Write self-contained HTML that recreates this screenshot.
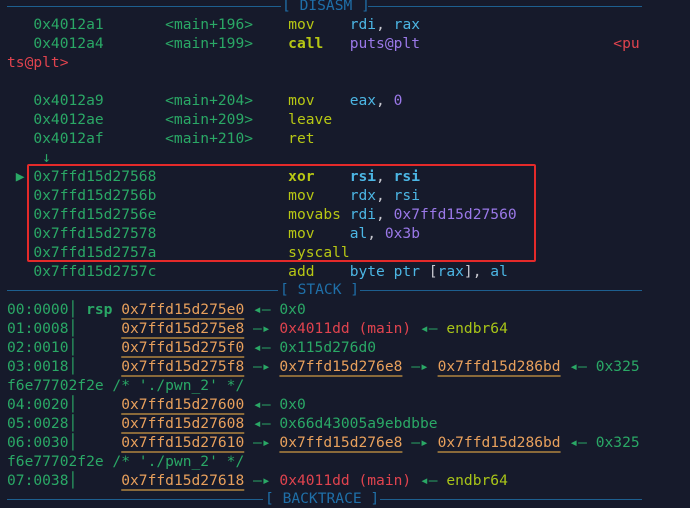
<!DOCTYPE html>
<html><head><meta charset="utf-8"><style>
html,body{margin:0;padding:0;background:#161a2b;width:690px;height:502px;overflow:hidden}
.l{position:absolute;left:7px;white-space:pre;font-family:"DejaVu Sans Mono","Liberation Mono",monospace;font-size:14.6px;line-height:19px;height:19px;color:#2aa866}
.g{color:#2aa866}.m{color:#b7c714}.b{font-weight:bold}.c{color:#4cb6e4}.p{color:#9a78e8}.r{color:#e0434e}.o{color:#e8a05c;text-decoration:underline;text-decoration-color:#8a6a3a;text-underline-offset:4px;text-decoration-thickness:2px}.y{color:#a8c418}.w{color:#c8c8d0}
.sep{position:absolute;height:1px;background:#1d5f8f}
.st{position:absolute;font-family:"DejaVu Sans Mono",monospace;font-size:14.6px;color:#1f6fa8;line-height:19px;white-space:pre}
.box{position:absolute;left:27px;top:164px;width:505px;height:94px;border:2px solid #e42a2a;border-radius:2px}
</style></head><body>
<div class="sep" style="left:7px;top:6px;width:274px"></div><div class="st" style="left:282px;top:-4px">[ DISASM ]</div><div class="sep" style="left:368px;top:6px;width:274px"></div>
<div class="l" style="top:15px">   0x4012a1       <span class="g">&lt;main+196&gt;</span>    <span class="m">mov</span>    <span class="c">rdi</span><span class="w">,</span> <span class="c">rax</span></div>
<div class="l" style="top:34px">   0x4012a4       &lt;main+199&gt;    <span class="m b">call</span>   <span class="p">puts@plt</span>                      <span class="r">&lt;pu</span></div>
<div class="l" style="top:53px"><span class="r">ts@plt&gt;</span></div>
<div class="l" style="top:91px">   0x4012a9       &lt;main+204&gt;    <span class="m">mov</span>    <span class="c">eax</span><span class="w">,</span> <span class="p">0</span></div>
<div class="l" style="top:110px">   0x4012ae       &lt;main+209&gt;    <span class="m">leave</span></div>
<div class="l" style="top:129px">   0x4012af       &lt;main+210&gt;    <span class="m">ret</span></div>
<div class="l" style="top:148px">    ↓</div>
<div class="l" style="top:167px"> ▶ 0x7ffd15d27568               <span class="m b">xor</span>    <span class="c b">rsi</span><span class="w">,</span> <span class="c b">rsi</span></div>
<div class="l" style="top:186px">   0x7ffd15d2756b               <span class="m">mov</span>    <span class="c">rdx</span><span class="w">,</span> <span class="c">rsi</span></div>
<div class="l" style="top:205px">   0x7ffd15d2756e               <span class="m">movabs</span> <span class="c">rdi</span><span class="w">,</span> <span class="p">0x7ffd15d27560</span></div>
<div class="l" style="top:224px">   0x7ffd15d27578               <span class="m">mov</span>    <span class="c">al</span><span class="w">,</span> <span class="p">0x3b</span></div>
<div class="l" style="top:243px">   0x7ffd15d2757a               <span class="m">syscall</span></div>
<div class="l" style="top:262px">   0x7ffd15d2757c               <span class="m">add</span>    <span class="c">byte ptr </span><span class="w">[</span><span class="c">rax</span><span class="w">],</span> <span class="c">al</span></div>
<div class="box"></div>
<div class="sep" style="left:7px;top:290px;width:271px"></div><div class="st" style="left:280px;top:280px">[ STACK ]</div><div class="sep" style="left:360px;top:290px;width:282px"></div>
<div class="l" style="top:300px">00:0000│ <span class="b">rsp</span> <span class="o">0x7ffd15d275e0</span> ◂— 0x0</div>
<div class="l" style="top:319px">01:0008│     <span class="o">0x7ffd15d275e8</span> —▸ <span class="r">0x4011dd (main)</span> ◂— <span class="y">endbr64</span></div>
<div class="l" style="top:338px">02:0010│     <span class="o">0x7ffd15d275f0</span> ◂— 0x115d276d0</div>
<div class="l" style="top:357px">03:0018│     <span class="o">0x7ffd15d275f8</span> —▸ <span class="o">0x7ffd15d276e8</span> —▸ <span class="o">0x7ffd15d286bd</span> ◂— 0x325</div>
<div class="l" style="top:376px">f6e77702f2e /* './pwn_2' */</div>
<div class="l" style="top:395px">04:0020│     <span class="o">0x7ffd15d27600</span> ◂— 0x0</div>
<div class="l" style="top:414px">05:0028│     <span class="o">0x7ffd15d27608</span> ◂— 0x66d43005a9ebdbbe</div>
<div class="l" style="top:433px">06:0030│     <span class="o">0x7ffd15d27610</span> —▸ <span class="o">0x7ffd15d276e8</span> —▸ <span class="o">0x7ffd15d286bd</span> ◂— 0x325</div>
<div class="l" style="top:452px">f6e77702f2e /* './pwn_2' */</div>
<div class="l" style="top:471px">07:0038│     <span class="o">0x7ffd15d27618</span> —▸ <span class="r">0x4011dd (main)</span> ◂— <span class="y">endbr64</span></div>
<div class="sep" style="left:7px;top:499px;width:256px"></div><div class="st" style="left:265px;top:489px">[ BACKTRACE ]</div><div class="sep" style="left:380px;top:499px;width:262px"></div>
</body></html>
